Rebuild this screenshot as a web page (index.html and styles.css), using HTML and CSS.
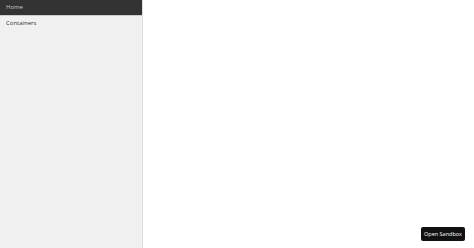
FILE: index.html
```html
<!DOCTYPE html>
<html>
<head>
<meta charset="utf-8">
<link rel="stylesheet" href="styles.css">
</head>
<body>
<div class="layout">
  <aside class="sidebar">
    <div class="nav-item active">Home</div>
    <div class="nav-item">Containers</div>
  </aside>
  <main class="content"></main>
</div>
<button class="sandbox-btn">Open Sandbox</button>
</body>
</html>
```
FILE: styles.css
```css
html, body {
  margin: 0;
  padding: 0;
  height: 100%;
}
body {
  font-family: "Open Sans", "Liberation Sans", sans-serif;
  background: #fff;
}
.layout {
  display: flex;
  height: 248px;
}
.sidebar {
  width: 142px;
  background: #f0f0f0;
  border-right: 1px solid #dcdcdc;
  display: flex;
  flex-direction: column;
}
.nav-item {
  font-size: 6px;
  color: #333;
  padding: 4px 6px;
  line-height: 7.5px;
}
.nav-item.active {
  background: #333;
  color: #c8c8c8;
  height: 7px;
  border-bottom: 1px solid #ccc;
}
.content {
  flex: 1;
}
.sandbox-btn {
  position: fixed;
  right: 9px;
  bottom: 7px;
  width: 44px;
  height: 14px;
  padding: 0;
  background: #111;
  color: #fff;
  border: none;
  border-radius: 2px;
  font-family: "Open Sans", "Liberation Sans", sans-serif;
  font-size: 5.5px;
}
```
